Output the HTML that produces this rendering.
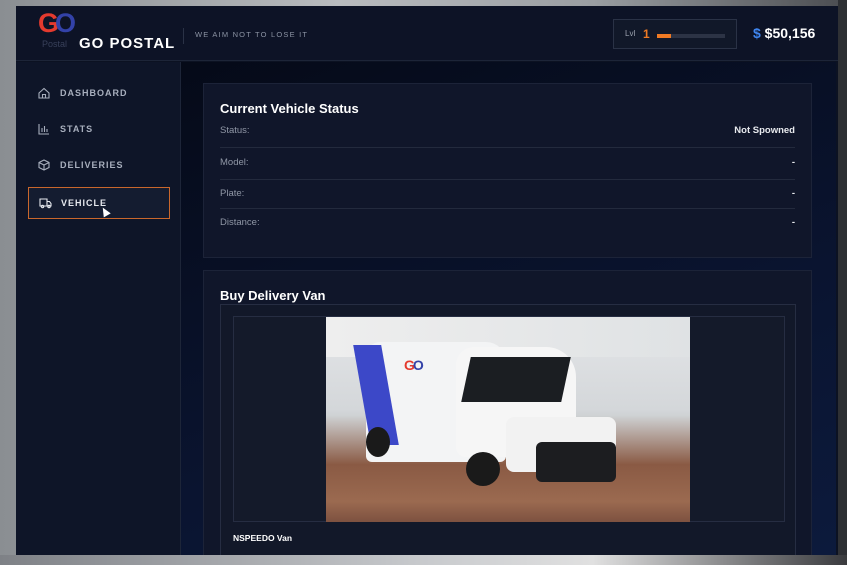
<!DOCTYPE html>
<html><head><style>
*{margin:0;padding:0;box-sizing:border-box}
body{width:847px;height:565px;overflow:hidden;position:relative;font-family:"Liberation Sans",sans-serif;background:linear-gradient(90deg,#8a8e92,#b9bcbf 40%,#9a9ea2 70%,#4a4c50);}
.bgbot{position:absolute;left:0;top:555px;width:847px;height:10px;background:linear-gradient(90deg,#7e8186,#c8cacd 50%,#e0e0e0 70%,#3a3b3e)}
.bgr{position:absolute;left:838px;top:0;width:9px;height:565px;background:#2e3034}
.win{position:absolute;left:16px;top:6px;width:822px;height:549px;background:#0c1222;overflow:hidden}
.hdr{position:absolute;left:0;top:0;width:822px;height:55px;background:#0d1326;border-bottom:1px solid #1d2538}
.side{position:absolute;left:0;top:56px;width:165px;height:493px;background:#0e1528;border-right:1px solid #1d2538}
.main{position:absolute;left:165px;top:56px;width:655px;height:493px;background:linear-gradient(160deg,#050a18,#0a1430 60%,#0c1a3c)}
.nav{position:absolute;left:12px;width:142px;height:32px;color:#a8afbd;font-size:9px;font-weight:bold;letter-spacing:1px;padding-left:32px;line-height:32px}
.nav svg{position:absolute;left:10px;top:10px}
.card{position:absolute;left:22px;width:609px;background:#10162a;border:1px solid #1c2338}
.row{position:absolute;left:16px;right:16px;font-size:9.5px;color:#9097a6;border-bottom:1px solid #232a3d}
.row span{position:absolute;right:0;top:0;color:#e8eaee;font-weight:bold}
</style></head><body>
<div class="bgr"></div><div class="bgbot"></div>
<div class="win">
 <div class="hdr">
  <div style="position:absolute;left:22px;top:4px;font-weight:900;font-size:27px;line-height:27px;letter-spacing:-4px"><span style="color:#e43a2e">G</span><span style="color:#3342a8">O</span></div>
  <div style="position:absolute;left:26px;top:33px;font-size:9px;color:#38405a">Postal</div>
  <div style="position:absolute;left:63px;top:29px;color:#fff;font-weight:bold;font-size:15px;letter-spacing:1px">GO POSTAL</div>
  <div style="position:absolute;left:167px;top:22px;width:1px;height:16px;background:#2a3246"></div>
  <div style="position:absolute;left:179px;top:24px;color:#8b93a3;font-size:7.5px;letter-spacing:1.2px">WE AIM NOT TO LOSE IT</div>
  <div style="position:absolute;left:597px;top:13px;width:124px;height:30px;border:1px solid #2a3246;background:#111829">
   <span style="position:absolute;left:11px;top:9px;font-size:8px;color:#9aa1ae">Lvl</span>
   <span style="position:absolute;left:29px;top:7px;font-size:12px;color:#f07a24;font-weight:bold">1</span>
   <div style="position:absolute;left:43px;top:14px;width:68px;height:4px;background:#2c3345"><div style="width:14px;height:4px;background:#f07a24"></div></div>
  </div>
  <div style="position:absolute;left:737px;top:19px;font-size:14px;font-weight:bold;color:#fff"><span style="color:#3f86f0">$</span> $50,156</div>
 </div>
 <div class="side">
  <div class="nav" style="top:15px"><svg width="12" height="12" viewBox="0 0 12 12" fill="none" stroke="#a8afbd" stroke-width="1.1"><path d="M1 6L6 1.5L11 6V11H1Z M4.5 11V7.5H7.5V11"/></svg>DASHBOARD</div>
  <div class="nav" style="top:51px"><svg width="12" height="12" viewBox="0 0 12 12" fill="none" stroke="#a8afbd" stroke-width="1.1"><path d="M1 1V11H11 M4 9V5 M6.5 9V3 M9 9V6"/></svg>STATS</div>
  <div class="nav" style="top:87px"><svg width="12" height="12" viewBox="0 0 12 12" fill="none" stroke="#a8afbd" stroke-width="1.1"><path d="M6 1L11 3.5V8.5L6 11L1 8.5V3.5Z M1 3.5L6 6L11 3.5 M6 6V11"/></svg>DELIVERIES</div>
  <div class="nav" style="top:125px;height:32px;border:1px solid #c9672c;background:#141c30;color:#e6e9ee;line-height:30px"><svg width="13" height="12" viewBox="0 0 13 12" fill="none" stroke="#e6e9ee" stroke-width="1.1" style="top:9px"><path d="M1 2H8V9H1Z M8 4.5H10.5L12 6.5V9H8"/><circle cx="3.5" cy="9.5" r="1.2"/><circle cx="10" cy="9.5" r="1.2"/></svg>VEHICLE</div>
  <div style="position:absolute;left:85px;top:145px;width:0;height:0;border-left:4px solid transparent;border-right:4px solid transparent;border-bottom:9px solid #fff;transform:rotate(-30deg)"></div>
 </div>
 <div class="main">
  <div class="card" style="top:21px;height:175px">
   <div style="position:absolute;left:16px;top:17px;color:#fff;font-weight:bold;font-size:13px">Current Vehicle Status</div>
   <div class="row" style="top:41px;height:23px">Status:<span>Not Spowned</span></div>
   <div class="row" style="top:73px;height:23px">Model:<span>-</span></div>
   <div class="row" style="top:104px;height:21px">Plate:<span>-</span></div>
   <div class="row" style="top:133px;border:none">Distance:<span>-</span></div>
  </div>
  <div class="card" style="top:208px;height:300px">
   <div style="position:absolute;left:16px;top:17px;color:#fff;font-weight:bold;font-size:13px">Buy Delivery Van</div>
   <div style="position:absolute;left:16px;top:33px;width:576px;height:260px;border:1px solid #262d42;background:#121829">
    <div style="position:absolute;left:12px;top:11px;width:552px;height:206px;border:1px solid #262d42;background:#141a2a"></div>
    <div style="position:absolute;left:105px;top:12px;width:364px;height:205px;overflow:hidden;background:linear-gradient(180deg,#e4e6e8 0,#d4d7da 45%,#cfd2d4 48%,#8a5a44 72%,#9b6a50 90%,#7d5140)">
     <div style="position:absolute;left:0;top:0;width:364px;height:40px;background:linear-gradient(90deg,#eeeeee,#dfe2e4)"></div>
     <div style="position:absolute;left:40px;top:25px;width:140px;height:120px;background:#f3f4f5;border-radius:14px 20px 6px 6px"></div>
     <div style="position:absolute;left:36px;top:28px;width:28px;height:100px;background:#3c48c8;transform:skewX(10deg)"></div>
     <div style="position:absolute;left:130px;top:30px;width:120px;height:110px;background:#f6f6f6;border-radius:18px 30px 10px 10px"></div>
     <div style="position:absolute;left:140px;top:40px;width:100px;height:45px;background:#1b1e22;transform:skewX(-12deg)"></div>
     <div style="position:absolute;left:180px;top:100px;width:110px;height:55px;background:#f2f2f2;border-radius:8px"></div>
     <div style="position:absolute;left:210px;top:125px;width:80px;height:40px;background:#1c1d20;border-radius:6px"></div>
     <div style="position:absolute;left:140px;top:135px;width:34px;height:34px;border-radius:50%;background:#1a1a1a"></div>
     <div style="position:absolute;left:40px;top:110px;width:24px;height:30px;border-radius:50%;background:#1a1a1a"></div>
     <div style="position:absolute;left:78px;top:40px;font-weight:900;font-size:14px;letter-spacing:-2px"><span style="color:#e43a2e">G</span><span style="color:#3342a8">O</span></div>
    </div>
    <div style="position:absolute;left:12px;top:228px;color:#fff;font-weight:bold;font-size:8.5px">NSPEEDO Van</div>
   </div>
  </div>
 </div>
</div>
</body></html>
